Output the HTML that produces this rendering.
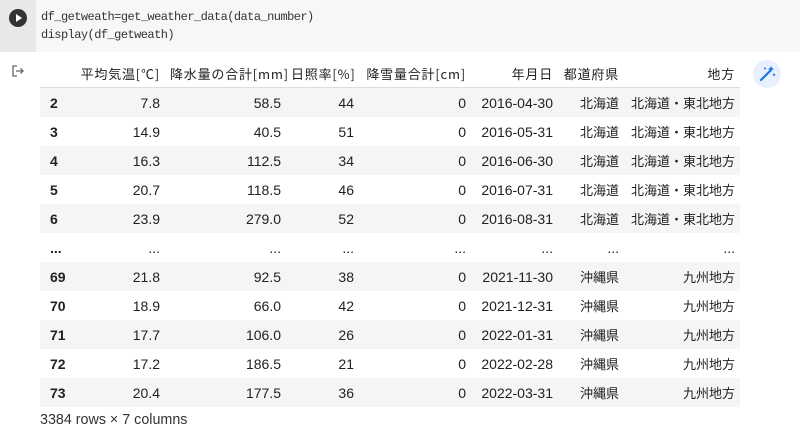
<!DOCTYPE html>
<html><head><meta charset="utf-8"><style>
body{margin:0;width:800px;height:433px;background:#fff;position:relative;overflow:hidden;font-family:"Liberation Sans","Noto Sans CJK JP",sans-serif;color:#212121}
.gut{position:absolute;left:0;top:0;width:36px;height:52px;background:#e8e8e8}
.code{position:absolute;left:36px;top:0;width:764px;height:52px;background:#f7f7f7}
.code pre{margin:0;position:absolute;left:5px;top:8px;font:12px/18px "Liberation Mono","Noto Sans CJK JP",monospace;letter-spacing:-0.55px;color:#333}
.play{position:absolute;left:9px;top:9px;width:18px;height:18px;border-radius:50%;background:#333}
.play:after{content:"";position:absolute;left:7px;top:5px;border-left:6px solid #fff;border-top:4px solid transparent;border-bottom:4px solid transparent}
table{position:absolute;left:40px;top:59px;border-collapse:collapse;font-size:14px;width:700px;table-layout:fixed}
th{font-weight:normal;text-align:right;height:28px;padding:0 5px;border-bottom:1px solid #ddd;white-space:nowrap;font-family:"Noto Sans CJK JP",sans-serif;font-size:13px;letter-spacing:0.8px}
td{text-align:right;height:29px;padding:0 5px;white-space:nowrap}
td.c{font-family:"Noto Sans CJK JP",sans-serif;font-size:13px}
td.i{text-align:left;font-weight:bold;padding-left:10px}
tbody tr:nth-child(odd){background:#f5f5f5}
.foot{position:absolute;left:40px;top:412px;font-size:14.3px;color:#333}
.wand{position:absolute;left:753px;top:60px;width:28px;height:28px;border-radius:50%;background:#e8f0fe}
</style></head><body>
<div class="gut"><div class="play"></div></div>
<div class="code"><pre>df_getweath=get_weather_data(data_number)
display(df_getweath)</pre></div>
<svg style="position:absolute;left:11px;top:64px" width="14" height="14" viewBox="0 0 14 14"><path d="M6 2H2v10h4" fill="none" stroke="#666" stroke-width="1.3"/><path d="M5 7h7M9.5 4.5L12 7 9.5 9.5" fill="none" stroke="#666" stroke-width="1.3"/></svg>
<div class="wand"><svg width="28" height="28" viewBox="0 0 28 28"><path d="M8 20L17 11" stroke="#1a73e8" stroke-width="2.2" stroke-linecap="round"/><path d="M18 6l1 2 2 1-2 1-1 2-1-2-2-1 2-1z M21 13l.6 1.2 1.2.6-1.2.6-.6 1.2-.6-1.2-1.2-.6 1.2-.6z M12 7l.5 1 1 .5-1 .5-.5 1-.5-1-1-.5 1-.5z" fill="#1a73e8"/></svg></div>
<table>
<colgroup><col style="width:31px"><col style="width:94px"><col style="width:121px"><col style="width:73px"><col style="width:112px"><col style="width:87px"><col style="width:66px"><col style="width:116px"></colgroup>
<thead><tr><th></th><th>平均気温[℃]</th><th>降水量の合計[mm]</th><th>日照率[%]</th><th>降雪量合計[cm]</th><th>年月日</th><th>都道府県</th><th>地方</th></tr></thead>
<tbody>
<tr><td class="i">2</td><td>7.8</td><td>58.5</td><td>44</td><td>0</td><td>2016-04-30</td><td class="c">北海道</td><td class="c">北海道・東北地方</td></tr>
<tr><td class="i">3</td><td>14.9</td><td>40.5</td><td>51</td><td>0</td><td>2016-05-31</td><td class="c">北海道</td><td class="c">北海道・東北地方</td></tr>
<tr><td class="i">4</td><td>16.3</td><td>112.5</td><td>34</td><td>0</td><td>2016-06-30</td><td class="c">北海道</td><td class="c">北海道・東北地方</td></tr>
<tr><td class="i">5</td><td>20.7</td><td>118.5</td><td>46</td><td>0</td><td>2016-07-31</td><td class="c">北海道</td><td class="c">北海道・東北地方</td></tr>
<tr><td class="i">6</td><td>23.9</td><td>279.0</td><td>52</td><td>0</td><td>2016-08-31</td><td class="c">北海道</td><td class="c">北海道・東北地方</td></tr>
<tr><td class="i">...</td><td>...</td><td>...</td><td>...</td><td>...</td><td>...</td><td>...</td><td>...</td></tr>
<tr><td class="i">69</td><td>21.8</td><td>92.5</td><td>38</td><td>0</td><td>2021-11-30</td><td class="c">沖縄県</td><td class="c">九州地方</td></tr>
<tr><td class="i">70</td><td>18.9</td><td>66.0</td><td>42</td><td>0</td><td>2021-12-31</td><td class="c">沖縄県</td><td class="c">九州地方</td></tr>
<tr><td class="i">71</td><td>17.7</td><td>106.0</td><td>26</td><td>0</td><td>2022-01-31</td><td class="c">沖縄県</td><td class="c">九州地方</td></tr>
<tr><td class="i">72</td><td>17.2</td><td>186.5</td><td>21</td><td>0</td><td>2022-02-28</td><td class="c">沖縄県</td><td class="c">九州地方</td></tr>
<tr><td class="i">73</td><td>20.4</td><td>177.5</td><td>36</td><td>0</td><td>2022-03-31</td><td class="c">沖縄県</td><td class="c">九州地方</td></tr>
</tbody></table>
<div class="foot">3384 rows × 7 columns</div>
</body></html>
